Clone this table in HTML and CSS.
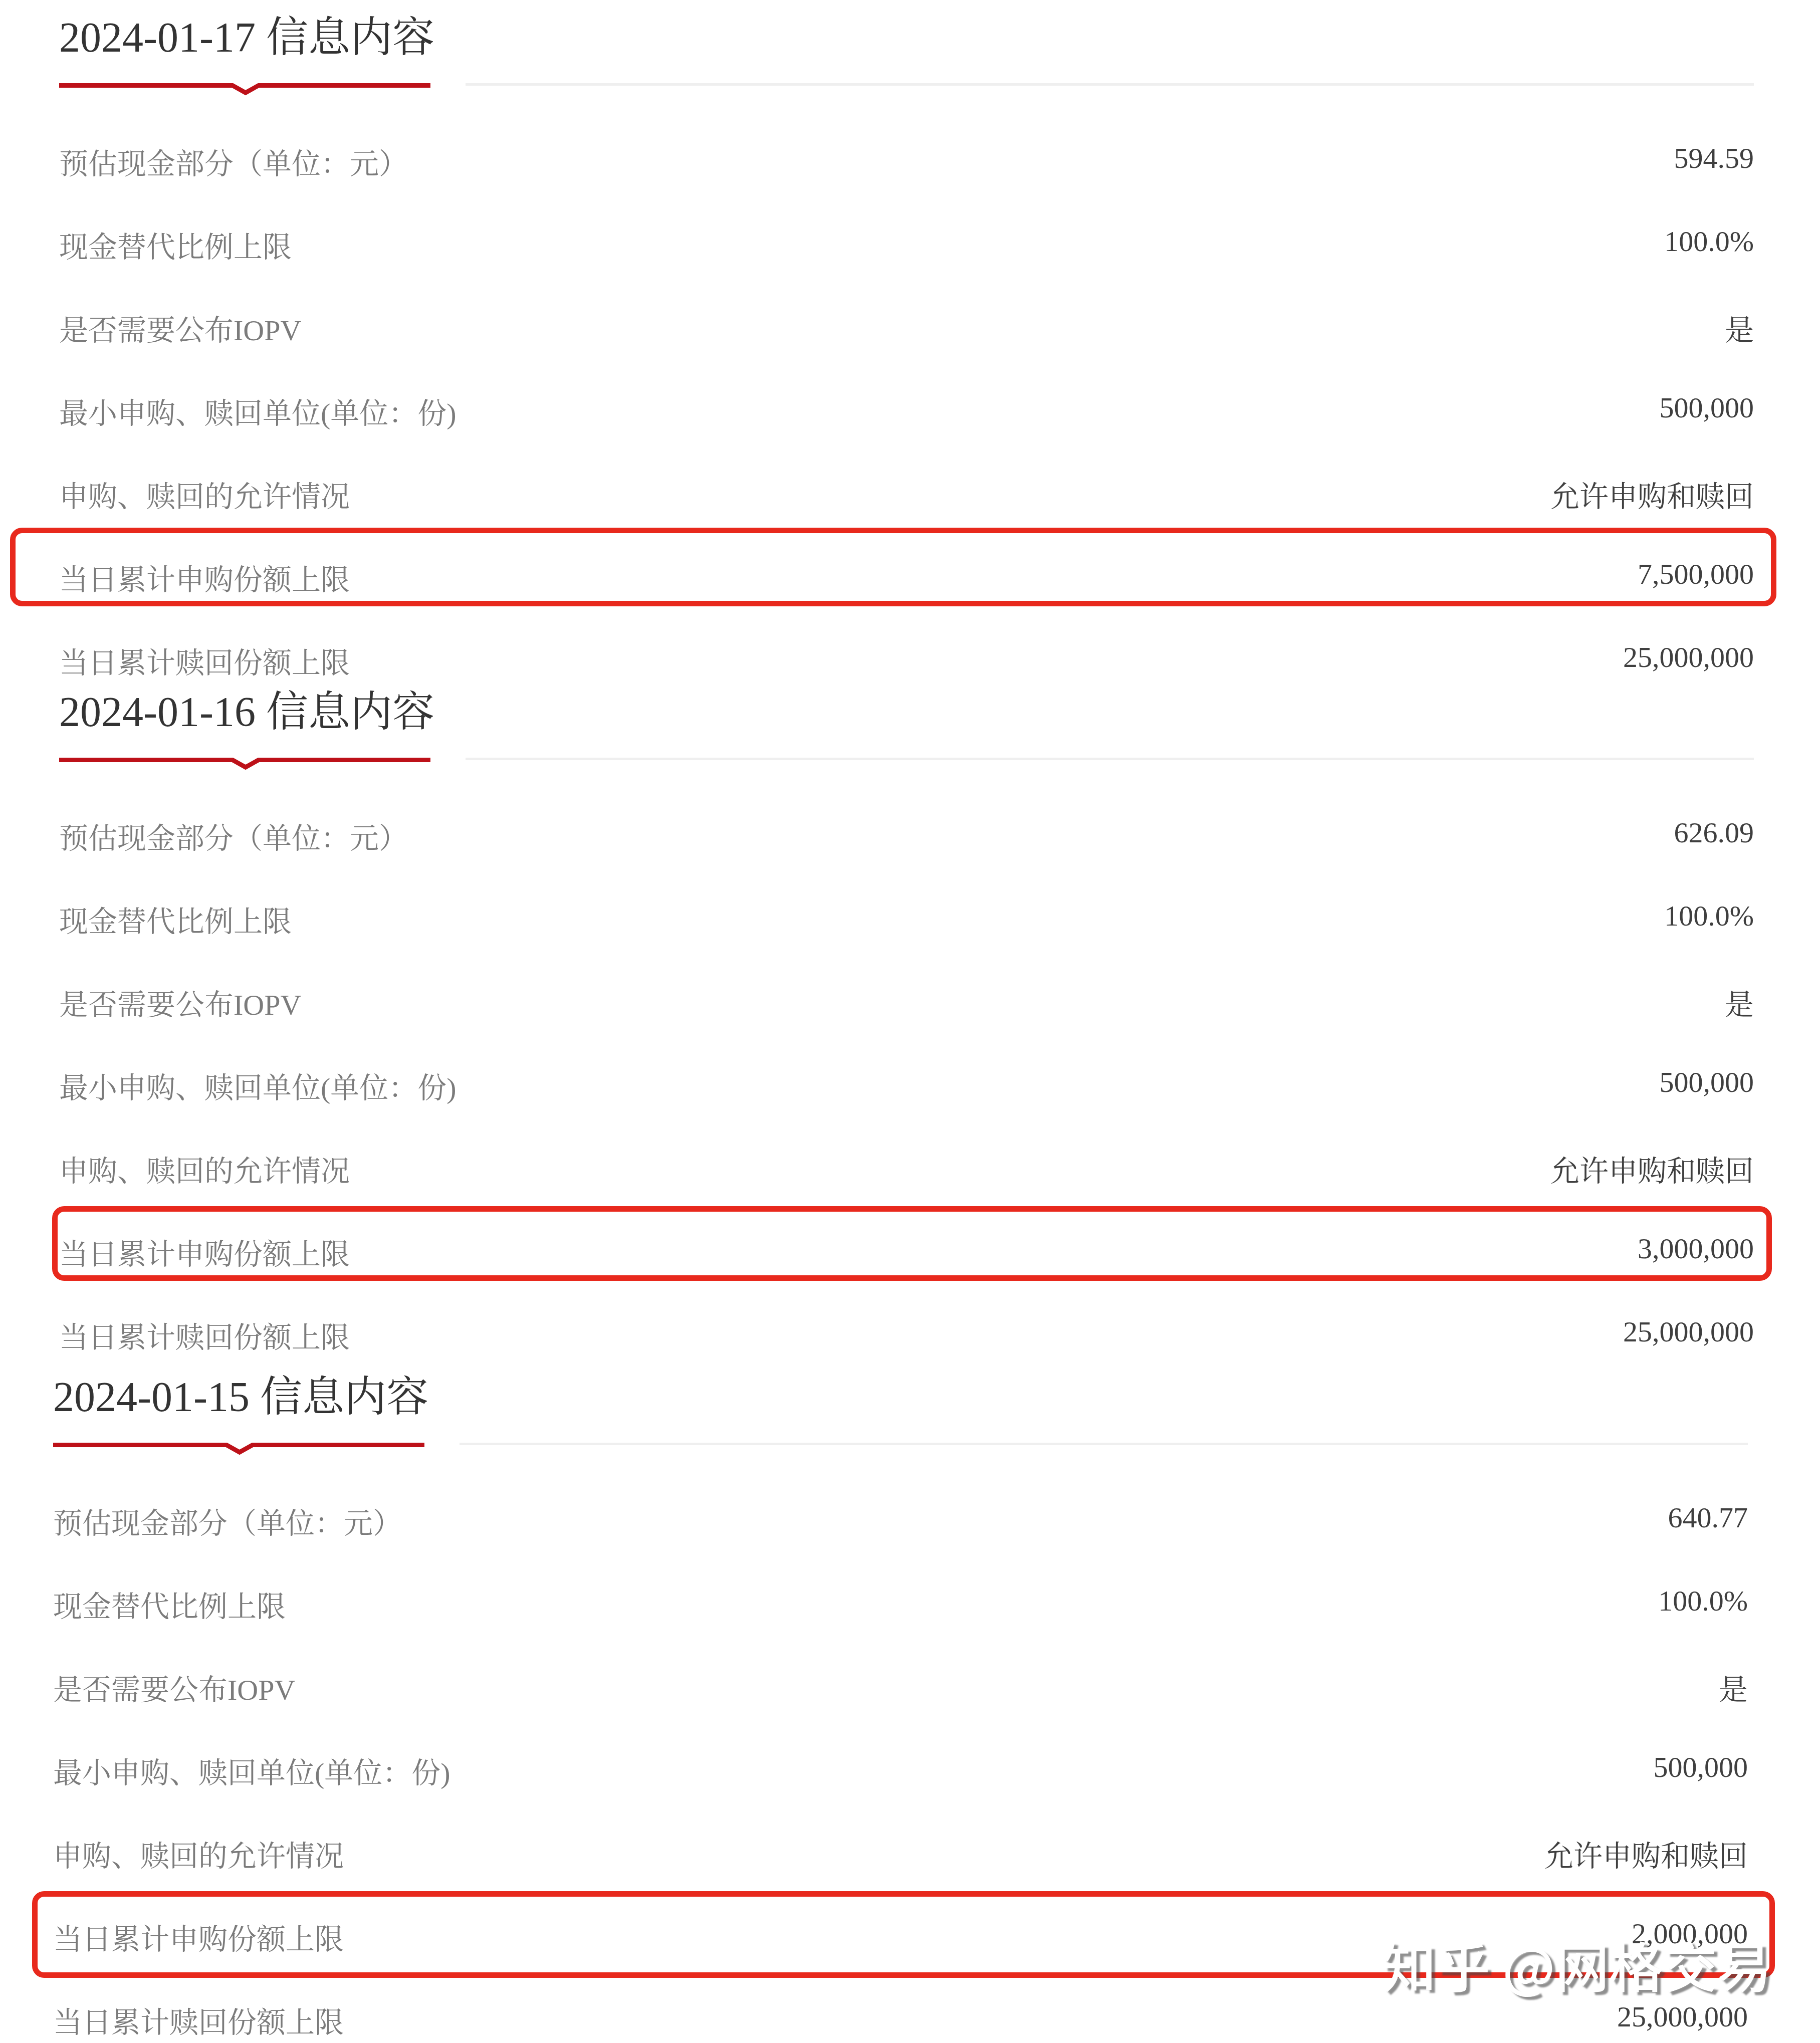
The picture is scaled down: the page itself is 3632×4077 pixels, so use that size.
FILE: index.html
```html
<!DOCTYPE html>
<html lang="zh-CN">
<head>
<meta charset="utf-8">
<title>信息内容</title>
<link rel="stylesheet" href="styles.css">
</head>
<body>
<div class="page">

  <section class="block">
    <div class="head">
      <div class="title-wrap">
        <h2 class="title">2024-01-17 信息内容</h2>
        <svg class="red-line" width="741" height="26" viewBox="0 0 741 26"><path d="M0 4.5 H346 L372 19 L398 4.5 H741" fill="none" stroke="#bd1119" stroke-width="9"/></svg>
      </div>
      <div class="grey-line"></div>
    </div>
    <div class="rows">
      <div class="row"><span class="label">预估现金部分（单位：元）</span><span class="val num">594.59</span></div>
      <div class="row"><span class="label">现金替代比例上限</span><span class="val num">100.0%</span></div>
      <div class="row"><span class="label">是否需要公布IOPV</span><span class="val">是</span></div>
      <div class="row"><span class="label">最小申购、赎回单位(单位：份)</span><span class="val num">500,000</span></div>
      <div class="row"><span class="label">申购、赎回的允许情况</span><span class="val">允许申购和赎回</span></div>
      <div class="row"><span class="mark mark-a"></span><span class="label">当日累计申购份额上限</span><span class="val num">7,500,000</span></div>
      <div class="row"><span class="label">当日累计赎回份额上限</span><span class="val num">25,000,000</span></div>
    </div>
  </section>

  <section class="block">
    <div class="head">
      <div class="title-wrap">
        <h2 class="title">2024-01-16 信息内容</h2>
        <svg class="red-line" width="741" height="26" viewBox="0 0 741 26"><path d="M0 4.5 H346 L372 19 L398 4.5 H741" fill="none" stroke="#bd1119" stroke-width="9"/></svg>
      </div>
      <div class="grey-line"></div>
    </div>
    <div class="rows">
      <div class="row"><span class="label">预估现金部分（单位：元）</span><span class="val num">626.09</span></div>
      <div class="row"><span class="label">现金替代比例上限</span><span class="val num">100.0%</span></div>
      <div class="row"><span class="label">是否需要公布IOPV</span><span class="val">是</span></div>
      <div class="row"><span class="label">最小申购、赎回单位(单位：份)</span><span class="val num">500,000</span></div>
      <div class="row"><span class="label">申购、赎回的允许情况</span><span class="val">允许申购和赎回</span></div>
      <div class="row"><span class="mark mark-b"></span><span class="label">当日累计申购份额上限</span><span class="val num">3,000,000</span></div>
      <div class="row"><span class="label">当日累计赎回份额上限</span><span class="val num">25,000,000</span></div>
    </div>
  </section>

  <section class="block block-shift">
    <div class="head">
      <div class="title-wrap">
        <h2 class="title">2024-01-15 信息内容</h2>
        <svg class="red-line" width="741" height="26" viewBox="0 0 741 26"><path d="M0 4.5 H346 L372 19 L398 4.5 H741" fill="none" stroke="#bd1119" stroke-width="9"/></svg>
      </div>
      <div class="grey-line"></div>
    </div>
    <div class="rows">
      <div class="row"><span class="label">预估现金部分（单位：元）</span><span class="val num">640.77</span></div>
      <div class="row"><span class="label">现金替代比例上限</span><span class="val num">100.0%</span></div>
      <div class="row"><span class="label">是否需要公布IOPV</span><span class="val">是</span></div>
      <div class="row"><span class="label">最小申购、赎回单位(单位：份)</span><span class="val num">500,000</span></div>
      <div class="row"><span class="label">申购、赎回的允许情况</span><span class="val">允许申购和赎回</span></div>
      <div class="row"><span class="mark mark-c"></span><span class="label">当日累计申购份额上限</span><span class="val num">2,000,000</span></div>
      <div class="row"><span class="label">当日累计赎回份额上限</span><span class="val num">25,000,000</span></div>
    </div>
  </section>

  <div class="watermark">知乎 @网格交易</div>
</div>
</body>
</html>
```

FILE: styles.css
```css
html, body {
  margin: 0;
  padding: 0;
  background: #ffffff;
}

.page {
  position: relative;
  width: 3632px;
  min-height: 4077px;
  box-sizing: border-box;
  padding: 25px 132px 0 118px;
  display: flex;
  flex-direction: column;
  gap: 12px;
  font-family: "Liberation Serif", "Noto Serif CJK SC", "Noto Sans CJK SC", serif;
  overflow: hidden;
}

.block {
  display: flex;
  flex-direction: column;
}

.block-shift {
  margin-top: 21px;
  margin-left: -12px;
  margin-right: 12px;
}

.head {
  display: flex;
  align-items: flex-start;
  gap: 70px;
}

.title-wrap {
  width: 741px;
  display: flex;
  flex-direction: column;
}

.title {
  margin: 0;
  font-size: 84px;
  line-height: 100px;
  font-weight: normal;
  color: #333333;
  white-space: nowrap;
}

.red-line {
  display: block;
  margin-top: 41px;
}

.grey-line {
  flex: 1;
  height: 5px;
  margin-top: 141px;
  background: #efefef;
}

.rows {
  display: flex;
  flex-direction: column;
  margin-top: 5px;
}

.row {
  position: relative;
  height: 166px;
  box-sizing: border-box;
  padding-top: 96px;
  display: flex;
  justify-content: space-between;
  align-items: center;
  font-size: 58px;
  line-height: 70px;
}

.label {
  color: #7b7b7b;
}

.val {
  color: #3f3f3f;
}

.val.num {
  margin-bottom: 24px;
}

.mark {
  position: absolute;
  border: 11px solid #e8291d;
  border-radius: 24px;
  box-sizing: border-box;
}

.mark-a {
  top: 26px;
  bottom: -17px;
  left: -98px;
  right: -45px;
}

.mark-b {
  top: 34px;
  bottom: -17px;
  left: -14px;
  right: -36px;
}

.mark-c {
  top: 34px;
  bottom: -41px;
  left: -42px;
  right: -54px;
}

.watermark {
  position: absolute;
  left: 2758px;
  top: 3860px;
  font-family: "Noto Sans CJK SC", "Noto Sans", sans-serif;
  font-size: 108px;
  line-height: 1.1;
  font-weight: 500;
  color: #ffffff;
  white-space: nowrap;
  text-shadow: 7px 6px 3px rgba(70, 70, 70, 0.6);
}
```
